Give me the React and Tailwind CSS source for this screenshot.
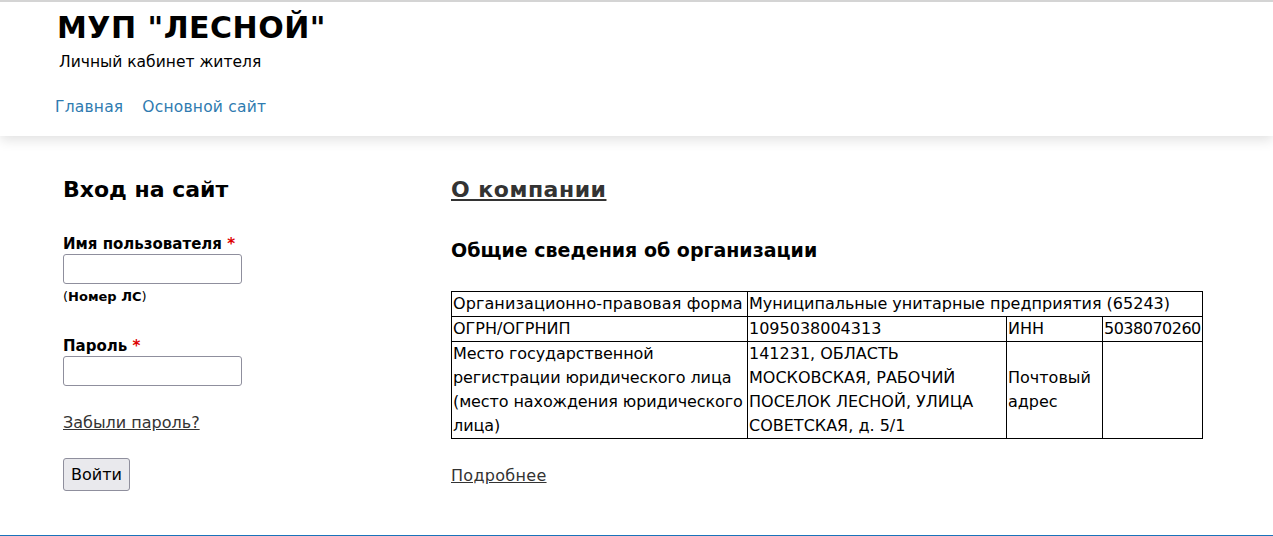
import React from "react";

const font = { fontFamily: '"DejaVu Sans", "Open Sans", sans-serif' };

const Header = () => (
  <header className="border-t-2 border-[#d4d4d4] bg-white h-[136px] shadow-[0_4px_12px_rgba(0,0,0,0.12)] relative z-10">
    <div className="pl-[57px] pt-[6px]">
      <h1 className="text-[30px] font-bold leading-[40px] text-black tracking-[0.5px]">
        МУП "ЛЕСНОЙ"
      </h1>
      <div className="pl-[2px] mt-[4px] text-[15.5px] leading-[20px] text-black">
        Личный кабинет жителя
      </div>
      <nav className="flex gap-[19px] mt-[25px] text-[15.5px] leading-[20px] tracking-[0.2px] text-[#2f7bb0] -ml-[2px]">
        <a href="#">Главная</a>
        <a href="#">Основной сайт</a>
      </nav>
    </div>
  </header>
);

const LoginForm = () => (
  <form className="w-[451px] shrink-0 pl-[63px]" onSubmit={(e) => e.preventDefault()}>
    <h2 className="text-[22px] font-bold leading-[28px] text-black">Вход на сайт</h2>
    <label className="block mt-[30px] text-[15px] font-bold leading-[20px] text-black">
      Имя пользователя <span className="text-[#d00]">*</span>
    </label>
    <input className="block w-[179px] h-[30px] border border-[#8f8f9d] rounded-[3px] bg-white" type="text" />
    <div className="mt-[3px] text-[13px] leading-[20px] text-black">
      (<b>Номер ЛС</b>)
    </div>
    <label className="block mt-[29px] text-[15px] font-bold leading-[20px] text-black">
      Пароль <span className="text-[#d00]">*</span>
    </label>
    <input className="block w-[179px] h-[30px] border border-[#8f8f9d] rounded-[3px] bg-white" type="password" />
    <a href="#" className="inline-block mt-[27px] text-[16px] leading-[20px] text-[#333] underline">
      Забыли пароль?
    </a>
    <div className="mt-[23px]">
      <button type="submit" className="h-[33px] px-[7px] bg-[#e9e9ed] border border-[#8f8f9d] rounded-[3px] text-[16px] text-black">
        Войти
      </button>
    </div>
  </form>
);

const cellTop = "border border-black align-top px-[1px] py-0 leading-[24px] whitespace-nowrap overflow-hidden";
const cellMid = "border border-black align-middle px-[1px] py-0 leading-[24px] whitespace-nowrap";

const About = () => (
  <section className="flex-1">
    <h2 className="text-[22px] font-bold leading-[28px] tracking-[0.5px]">
      <a href="#" className="text-[#333] underline">О компании</a>
    </h2>
    <h3 className="mt-[34px] text-[19px] font-bold leading-[24px] text-black">
      Общие сведения об организации
    </h3>
    <table className="mt-[29px] w-[752px] table-fixed border-collapse text-[16px] text-black">
      <colgroup>
        <col className="w-[296px]" />
        <col className="w-[259px]" />
        <col className="w-[96px]" />
        <col className="w-[100px]" />
      </colgroup>
      <tbody>
        <tr>
          <td className={`${cellTop} tracking-[0.1px]`}>Организационно-правовая форма</td>
          <td className={cellTop} colSpan={3}>Муниципальные унитарные предприятия (65243)</td>
        </tr>
        <tr>
          <td className={cellTop}>ОГРН/ОГРНИП</td>
          <td className={cellTop}>1095038004313</td>
          <td className={cellTop}>ИНН</td>
          <td className={`${cellTop} tracking-[-0.5px]`}>5038070260</td>
        </tr>
        <tr>
          <td className={`${cellTop} tracking-[-0.1px]`}>
            Место государственной<br />
            регистрации юридического лица<br />
            (место нахождения юридического<br />
            лица)
          </td>
          <td className={cellTop}>
            141231, ОБЛАСТЬ<br />
            МОСКОВСКАЯ, РАБОЧИЙ<br />
            ПОСЕЛОК ЛЕСНОЙ, УЛИЦА<br />
            СОВЕТСКАЯ, д. 5/1
          </td>
          <td className={cellMid}>
            Почтовый<br />адрес
          </td>
          <td className={cellTop}></td>
        </tr>
      </tbody>
    </table>
    <a href="#" className="inline-block mt-[27px] text-[16px] leading-[20px] tracking-[0.3px] text-[#333] underline">
      Подробнее
    </a>
  </section>
);

export default function App() {
  return (
    <div className="min-h-[536px] bg-white" style={font}>
      <Header />
      <main className="flex pt-[40px] pb-[44px]">
        <LoginForm />
        <About />
      </main>
      <footer className="h-[1px] bg-[#1a73ba]"></footer>
    </div>
  );
}
